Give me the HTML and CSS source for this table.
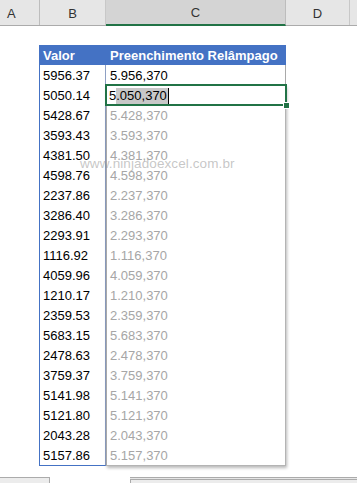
FILE: index.html
```html
<!DOCTYPE html>
<html lang="pt-BR">
<head>
<meta charset="utf-8">
<title>Preenchimento Relâmpago</title>
<link rel="stylesheet" href="styles.css">
</head>
<body>
<div class="app">
  <div class="colheads">
    <div class="ch ch-a">A</div>
    <div class="ch ch-b">B</div>
    <div class="ch ch-c">C</div>
    <div class="ch ch-d">D</div>
    <div class="ch ch-rest"></div>
  </div>

  <div class="sheet">
    <div class="table">
      <div class="col col-b">
        <div class="hd">Valor</div>
        <div class="cell">5956.37</div>
        <div class="cell">5050.14</div>
        <div class="cell">5428.67</div>
        <div class="cell">3593.43</div>
        <div class="cell">4381.50</div>
        <div class="cell">4598.76</div>
        <div class="cell">2237.86</div>
        <div class="cell">3286.40</div>
        <div class="cell">2293.91</div>
        <div class="cell">1116.92</div>
        <div class="cell">4059.96</div>
        <div class="cell">1210.17</div>
        <div class="cell">2359.53</div>
        <div class="cell">5683.15</div>
        <div class="cell">2478.63</div>
        <div class="cell">3759.37</div>
        <div class="cell">5141.98</div>
        <div class="cell">5121.80</div>
        <div class="cell">2043.28</div>
        <div class="cell">5157.86</div>
      </div>
      <div class="col col-c">
        <div class="hd">Preenchimento Relâmpago</div>
        <div class="cell first">5.956,370</div>
        <div class="preview">
          <div class="cell active">5<span class="sel">.050,370</span></div>
          <div class="cell ghost">5.428,370</div>
          <div class="cell ghost">3.593,370</div>
          <div class="cell ghost">4.381,370</div>
          <div class="cell ghost">4.598,370</div>
          <div class="cell ghost">2.237,370</div>
          <div class="cell ghost">3.286,370</div>
          <div class="cell ghost">2.293,370</div>
          <div class="cell ghost">1.116,370</div>
          <div class="cell ghost">4.059,370</div>
          <div class="cell ghost">1.210,370</div>
          <div class="cell ghost">2.359,370</div>
          <div class="cell ghost">5.683,370</div>
          <div class="cell ghost">2.478,370</div>
          <div class="cell ghost">3.759,370</div>
          <div class="cell ghost">5.141,370</div>
          <div class="cell ghost">5.121,370</div>
          <div class="cell ghost">2.043,370</div>
          <div class="cell ghost">5.157,370</div>
        </div>
      </div>
    </div>
    <div class="watermark">www.ninjadoexcel.com.br</div>
  </div>

  <div class="tabs">
    <div class="tab tab-left"></div>
    <div class="tab tab-on"></div>
    <div class="tab tab-right"></div>
  </div>
</div>
</body>
</html>
```

FILE: styles.css
```css
* { box-sizing: border-box; }

html, body {
  margin: 0;
  padding: 0;
  background: #ffffff;
}

body {
  font-family: "Liberation Sans", Arial, sans-serif;
  font-size: 13px;
  color: #000;
}

.app {
  width: 357px;
  height: 483px;
  display: flex;
  flex-direction: column;
  overflow: hidden;
}

/* column letters strip */
.colheads {
  display: flex;
  height: 26px;
  flex: none;
  background: #e6e6e6;
  border-bottom: 1px solid #ababab;
}

.ch {
  display: flex;
  align-items: center;
  justify-content: center;
  border-right: 1px solid #c8c8c8;
  color: #333;
  font-size: 13px;
  padding-top: 1px;
}

.ch-a { width: 40px; justify-content: flex-start; padding-left: 7px; border-right-color: #bdbdbd; }
.ch-b { width: 66px; }
.ch-c {
  width: 180px;
  background: #d4d4d4;
  border-bottom: 2px solid #217346;
  margin-bottom: -1px;
  border-right-color: #bdbdbd;
}
.ch-d { width: 64px; }
.ch-rest { flex: 1; border-right: none; }

/* worksheet area */
.sheet {
  flex: 1;
  position: relative;
  padding: 19px 0 0 39px;
}

.table {
  display: flex;
}

.col {
  display: flex;
  flex-direction: column;
}

.hd {
  height: 20px;
  background: #4472c4;
  color: #ffffff;
  font-weight: bold;
  display: flex;
  align-items: center;
  padding-left: 3px;
  padding-top: 1px;
}

.cell {
  height: 20px;
  display: flex;
  align-items: center;
  padding-left: 3px;
  padding-top: 1px;
  white-space: nowrap;
}

.col-b {
  width: 67px;
  border-left: 1px solid #4472c4;
  border-right: 1px solid #8ea0c4;
  border-bottom: 1px solid #4472c4;
}
.col-b .hd { margin-left: -1px; padding-left: 4px; margin-right: -1px; }

.col-c {
  width: 180px;
}
.col-c .hd { padding-left: 4px; }

.col-c .first {
  border-right: 1px solid #a9a9a9;
  padding-left: 4px;
}

/* flash fill suggestion list */
.preview {
  border: 1px solid #b4b4b4;
  border-top: none;
  border-left-color: #a9a9a9;
  box-shadow: 1px 2px 3px rgba(0, 0, 0, 0.28);
  background: #ffffff;
  margin-bottom: -1px;
}

.preview .cell { padding-left: 3px; }

.ghost { color: #a6a6a6; }

.active {
  position: relative;
  outline: 2px solid #217346;
  outline-offset: -1px;
  margin-left: -1px;
  margin-right: -1px;
  padding-left: 4px;
}

.active::after {
  content: "";
  position: absolute;
  right: -4px;
  bottom: -4px;
  width: 5px;
  height: 5px;
  background: #217346;
  border: 1px solid #ffffff;
}

.sel {
  background: #c8c8c8;
  height: 16px;
  display: inline-flex;
  align-items: center;
  border-right: 1px solid #000;
  padding-right: 1px;
}

.watermark {
  position: absolute;
  left: 80px;
  top: 130px;
  font-size: 13.5px;
  color: rgba(150, 150, 150, 0.55);
  letter-spacing: 0.1px;
  pointer-events: none;
}

/* sheet tabs strip */
.tabs {
  height: 6px;
  flex: none;
  display: flex;
  background: #e6e6e6;
  border-top: 1px solid #ababab;
}

.tab-left {
  width: 50px;
  background: #ececec;
  border-right: 1px solid #ababab;
}

.tab-on {
  width: 80px;
  background: #ffffff;
  margin-top: -1px;
}

.tab-right {
  flex: 1;
  background: #ececec;
  border-left: 1px solid #ababab;
  margin-top: 1px;
  border-top: 1px solid #ababab;
}
```
